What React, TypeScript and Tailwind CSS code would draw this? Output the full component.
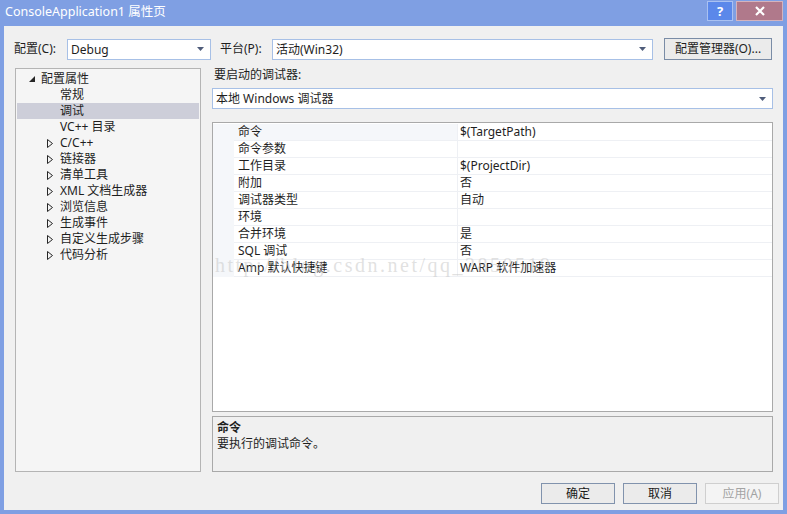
import React from "react";

const treeItems = [
  { label: "常规" },
  { label: "调试", selected: true },
  { label: "VC++ 目录" },
  { label: "C/C++", arrow: true },
  { label: "链接器", arrow: true },
  { label: "清单工具", arrow: true },
  { label: "XML 文档生成器", arrow: true },
  { label: "浏览信息", arrow: true },
  { label: "生成事件", arrow: true },
  { label: "自定义生成步骤", arrow: true },
  { label: "代码分析", arrow: true },
];

const props = [
  ["命令", "$(TargetPath)"],
  ["命令参数", ""],
  ["工作目录", "$(ProjectDir)"],
  ["附加", "否"],
  ["调试器类型", "自动"],
  ["环境", ""],
  ["合并环境", "是"],
  ["SQL 调试", "否"],
  ["Amp 默认快捷键", "WARP 软件加速器"],
];

function Combo({ value, className }: { value: string; className: string }) {
  return (
    <div className={`flex items-center h-[21px] border border-[#a7c0e6] bg-white pl-[3px] pr-[6px] ${className}`}>
      <span className="flex-1 truncate text-[12px] leading-[17px]">{value}</span>
      <svg width="7" height="4" viewBox="0 0 7 4">
        <path d="M0 0h7L3.5 4z" fill="#4f5c7a" />
      </svg>
    </div>
  );
}

function DlgButton({ label, disabled }: { label: string; disabled?: boolean }) {
  return (
    <div
      className={`w-[74px] h-[21px] flex items-center justify-center text-[12px] border ${
        disabled ? "border-[#cfcfcf] bg-[#f4f4f4] text-[#a3a3a3]" : "border-[#8193ad] bg-[#ebebeb] text-[#1a1a1a]"
      }`}
    >
      {label}
    </div>
  );
}

export default function App() {
  return (
    <div className="w-[787px] h-[514px] bg-[#7f9fe3] flex flex-col overflow-hidden text-[#1e1e1e] font-['Segoe_UI','Noto_Sans','Noto_Sans_CJK_SC',sans-serif]">
      {/* title bar */}
      <div className="h-[26px] flex items-start shrink-0">
        <div className="flex-1 pl-[5px] pt-[4px] text-[12.5px] leading-[16px] text-white">
          ConsoleApplication1 属性页
        </div>
        <div className="mt-[1px] w-[26px] h-[20px] bg-[#5b88ea] border border-[#a9c1f2] flex items-center justify-center text-white text-[13px] font-bold leading-none">
          ?
        </div>
        <div className="mt-[1px] ml-[3px] mr-[4px] w-[47px] h-[20px] bg-[#b0798b] border border-[#d4b3bd] flex items-center justify-center">
          <svg width="10" height="10" viewBox="0 0 10 10">
            <path d="M1 1l8 8M9 1l-8 8" stroke="#fff" strokeWidth="2.2" />
          </svg>
        </div>
      </div>

      {/* client area */}
      <div className="flex-1 mx-[4px] mb-[4px] bg-[#f0f0f0] flex flex-col">
        {/* config row */}
        <div className="flex items-center mt-[12px] pl-[10px] h-[22px] text-[12px]">
          <span className="w-[53px]">配置(C):</span>
          <Combo value="Debug" className="w-[144px]" />
          <span className="w-[52px] ml-[9px]">平台(P):</span>
          <Combo value="活动(Win32)" className="w-[381px]" />
          <div className="ml-[11px] w-[108px] h-[22px] border border-[#7a8ca6] bg-[#ebebeb] flex items-center justify-center">
            配置管理器(O)...
          </div>
        </div>

        {/* main */}
        <div className="flex mt-[8px] h-[404px] pl-[11px]">
          {/* tree */}
          <div className="w-[186px] border border-[#b4b4b4] bg-[#f5f5f5] pt-[2px] px-[1px] text-[12px]">
            <div className="h-[16px] flex items-center">
              <div className="w-[24px] flex justify-end pr-[6px]">
                <svg width="6" height="6" viewBox="0 0 6 6">
                  <path d="M6 0v6H0z" fill="#262626" />
                </svg>
              </div>
              <span>配置属性</span>
            </div>
            {treeItems.map((it) => (
              <div
                key={it.label}
                className={`h-[16px] flex items-center ${it.selected ? "bg-[#cdced9]" : ""}`}
              >
                <div className="w-[43px] flex justify-end pr-[7px]">
                  {it.arrow && (
                    <svg width="6" height="9" viewBox="0 0 6 9">
                      <path d="M0.5 0.5v8l5-4z" fill="none" stroke="#262626" strokeWidth="1" />
                    </svg>
                  )}
                </div>
                <span>{it.label}</span>
              </div>
            ))}
          </div>

          {/* right column */}
          <div className="w-[561px] ml-[11px] flex flex-col text-[12px]">
            <div className="h-[20px] pl-[2px] leading-[14px]">要启动的调试器:</div>
            <Combo value="本地 Windows 调试器" className="w-full" />

            <div className="relative mt-[13px] h-[290px] border border-[#a9a9a9] bg-white pt-[1px] overflow-hidden">
              {props.map(([name, value], i) => (
                <div key={name} className="flex h-[17px]">
                  <div className="w-[21px] bg-[#f5f7fa]" />
                  <div
                    className={`w-[224px] pl-[4px] border-b border-r border-[#eef0f4] flex items-center ${
                      i === 0 ? "bg-[#f5f7fa]" : ""
                    }`}
                  >
                    {name}
                  </div>
                  <div className="flex-1 pl-[2px] border-b border-[#eef0f4] flex items-center">{value}</div>
                </div>
              ))}
              {/* watermark */}
              <div className="absolute left-[2px] top-[131px] pointer-events-none text-[20px] leading-[22px] tracking-[2.5px] text-[#c4c4c4]/50 font-['Liberation_Serif',serif] whitespace-nowrap">
                http://blog.csdn.net/qq_2850519
              </div>
            </div>

            <div className="mt-[4px] h-[56px] border border-[#a9a9a9] bg-[#f0f0f0] pl-[4px] pt-[3px] leading-[16px]">
              <div className="font-bold">命令</div>
              <div>要执行的调试命令。</div>
            </div>
          </div>
        </div>

        {/* bottom buttons */}
        <div className="flex justify-end gap-[8px] mt-[11px] pr-[4px]">
          <DlgButton label="确定" />
          <DlgButton label="取消" />
          <DlgButton label="应用(A)" disabled />
        </div>
      </div>
    </div>
  );
}
